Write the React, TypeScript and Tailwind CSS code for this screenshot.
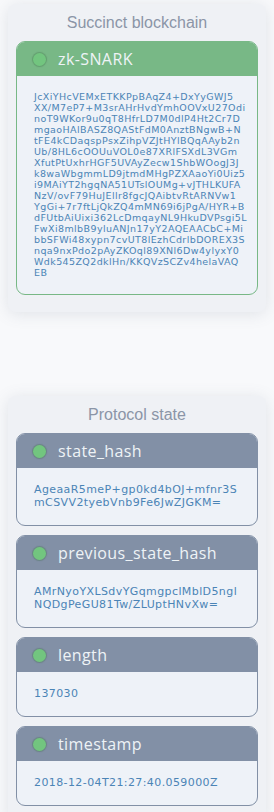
const snark = [
  "JcXiYHcVEMxETKKPpBAqZ4+DxYyGWJ5",
  "XX/M7eP7+M3srAHrHvdYmhOOVxU27Odi",
  "noT9WKor9u0qT8HfrLD7M0dlP4Ht2Cr7D",
  "mgaoHAlBASZ8QAStFdM0AnztBNgwB+N",
  "tFE4kCDaqspPsxZihpVZJtHYlBQqAAyb2n",
  "Ub/8HL6cOOUuVOL0e87XRlFSXdL3VGm",
  "XfutPtUxhrHGF5UVAyZecw1ShbWOogJ3J",
  "k8waWbgmmLD9jtmdMHgPZXAaoYi0Uiz5",
  "i9MAiYT2hgqNA51UTslOUMg+vJTHLKUFA",
  "NzV/ovF79HuJEllr8fgcJQAibtvRtARNVw1",
  "YgGi+7r7ftLjQkZQ4mMN69i6jPgA/HYR+B",
  "dFUtbAiUixi362LcDmqayNL9HkuDVPsgi5L",
  "FwXi8mlbB9yluANJn17yY2AQEAACbC+Mi",
  "bbSFWi48xypn7cvUT8lEzhCdrlbDOREX3S",
  "nqa9nxPdo2pAyZKOql89XNl6Dw4ylyxY0",
  "Wdk545ZQ2dklHn/KKQVzSCZv4helaVAQ",
  "EB",
];

const protocol = [
  { name: "state_hash", lines: ["AgeaaR5meP+gp0kd4bOJ+mfnr3S", "mCSVV2tyebVnb9Fe6JwZJGKM="] },
  { name: "previous_state_hash", lines: ["AMrNyoYXLSdvYGqmgpclMblD5ngl", "NQDgPeGU81Tw/ZLUptHNvXw="] },
  { name: "length", lines: ["137030"] },
  { name: "timestamp", lines: ["2018-12-04T21:27:40.059000Z"] },
];

function Field({
  name,
  lines,
  green,
  small,
}: {
  name: string;
  lines: string[];
  green?: boolean;
  small?: boolean;
}) {
  return (
    <div
      className={
        "overflow-hidden rounded-[9px] border bg-[#eef2f8] " +
        (green ? "border-[#78b886]" : "border-[#8290a6]")
      }
    >
      <div
        className={
          "flex h-[34px] items-center gap-[12px] px-[16px] " +
          (green ? "bg-[#78b886]" : "bg-[#8290a6]")
        }
      >
        <span className="h-[13px] w-[13px] rounded-full bg-[#72c57f] shadow-[0_0_1px_1px_rgba(60,110,70,0.35)]" />
        <span className="text-[16px] tracking-[0.4px] text-[#eef3f6]">{name}</span>
      </div>
      <div
        className={
          "px-[17px] pt-[15px] pb-[16px] font-['DejaVu_Sans',sans-serif] tracking-[0.4px] text-[#4b84b6] " +
          (small ? "text-[9.5px] leading-[11px]" : "text-[11px] leading-[13px]")
        }
      >
        {lines.map((l, i) => (
          <div key={i} className="whitespace-nowrap">
            {l}
          </div>
        ))}
      </div>
    </div>
  );
}

function Panel({ title, children }: { title: string; children: React.ReactNode }) {
  return (
    <div className="mx-[8px] rounded-[8px] bg-[#eff1f5] px-[8px] pb-[17px] shadow-[0_2px_16px_rgba(100,110,130,0.16)]">
      <div className="flex h-[37px] items-center justify-center font-['Liberation_Sans',sans-serif] text-[16px] text-[#8b95a7]">
        {title}
      </div>
      <div className="flex flex-col gap-[9px]">{children}</div>
    </div>
  );
}

export default function App() {
  return (
    <div className="min-h-[812px] bg-[#f8f9fb] pt-[4px] font-['Open_Sans',sans-serif]">
      <Panel title="Succinct blockchain">
        <Field name="zk-SNARK" lines={snark} green small />
      </Panel>
      <div className="h-[84px]" />
      <Panel title="Protocol state">
        {protocol.map((p) => (
          <Field key={p.name} name={p.name} lines={p.lines} />
        ))}
      </Panel>
    </div>
  );
}
